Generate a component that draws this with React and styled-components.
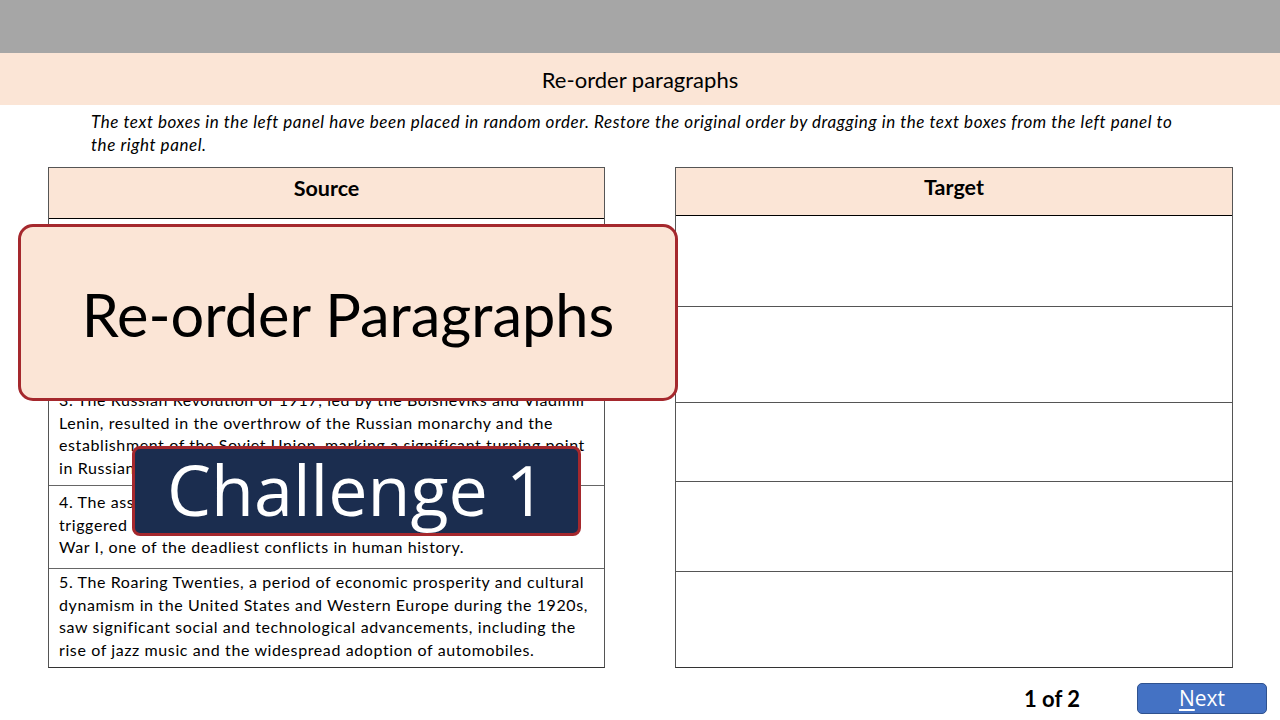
import React from 'react'
import styled, {createGlobalStyle} from 'styled-components'

const GlobalStyle = createGlobalStyle`
  html, body {
    margin: 0;
    padding: 0;
    background: #fff;
  }
  body {
    font-family: Lato, "Open Sans", sans-serif;
    color: #000;
  }
`

const Page = styled.div`
  position: relative;
  width: 1280px;
  height: 720px;
  overflow: hidden;
  background: #fff;
`

const Topbar = styled.div`
  height: 53px;
  background-color: #a6a6a6;
`

const TitleBar = styled.div`
  align-items: center;
  background-color: #fbe5d6;
  display: flex;
  font-size: 22px;
  height: 52px;
  justify-content: center;
`

const Instructions = styled.p`
  font-size: 17px;
  font-style: italic;
  letter-spacing: 0.56px;
  line-height: 23px;
  margin: 0;
  padding: 5px 60px 11px 91px;
  white-space: nowrap;
`

const Panels = styled.div`
  display: grid;
  gap: 70px;
  grid-template-columns: 557px 558px;
  margin-left: 48px;
`

const Panel = styled.div`
  border: 1px solid #555;
  border-bottom-color: #333;
  display: flex;
  flex-direction: column;
`

const PanelHeader = styled.div`
  align-items: center;
  background-color: #fbe5d6;
  border-bottom: 1px solid #000;
  box-sizing: border-box;
  display: flex;
  font-size: 21.5px;
  font-weight: 700;
  height: ${p => p.$h}px;
  justify-content: center;
  padding-bottom: 10px;
`

const SourceRow = styled.div`
  border-top: ${p => (p.$first ? 'none' : '1px solid #666')};
  box-sizing: border-box;
  font-size: 16px;
  height: ${p => p.$h}px;
  letter-spacing: 0.6px;
  line-height: 22.7px;
  padding: ${p => p.$pad}px 10px 0;
  white-space: nowrap;
`

const TargetRow = styled.div`
  border-top: ${p => (p.$first ? 'none' : '1px solid #555')};
  box-sizing: border-box;
  height: ${p => p.$h}px;
`

const Banner = styled.div`
  align-items: center;
  background-color: #fbe5d6;
  border: 3px solid #a5282d;
  border-radius: 15px;
  box-sizing: border-box;
  display: flex;
  font-size: 59.5px;
  height: 177px;
  justify-content: center;
  left: 18px;
  padding-top: 2px;
  position: absolute;
  top: 224px;
  width: 660px;
`

const Badge = styled.div`
  align-items: center;
  background-color: #1b2d4f;
  border: 3px solid #a5282d;
  border-radius: 8px;
  box-sizing: border-box;
  color: #fff;
  display: flex;
  font-family: "Open Sans", sans-serif;
  font-size: 70px;
  height: 90px;
  justify-content: center;
  left: 132px;
  padding-bottom: 4px;
  position: absolute;
  top: 446px;
  width: 449px;
`

const Footer = styled.div`
  align-items: center;
  display: flex;
  gap: 57px;
  justify-content: flex-end;
  padding: 15px 13px 0 0;
`

const Counter = styled.span`
  font-size: 22px;
  font-weight: 700;
`

const NextButton = styled.button`
  background-color: #4472c4;
  border: 1px solid #2f528f;
  border-radius: 5px;
  color: #fff;
  font-family: "Open Sans", sans-serif;
  font-size: 21px;
  height: 31px;
  line-height: 1;
  padding: 0;
  width: 130px;

  u {
    text-underline-offset: 3px;
  }
`

const sources = [
  {h: 83, pad: 5, lines: [
    '1. The signing of the Magna Carta in 1215 limited the powers of the',
    'English king and laid the foundations for constitutional law and the',
    'protection of individual rights.'
  ]},
  {h: 84, pad: 5, lines: [
    '2. The Industrial Revolution, which began in Britain in the late 18th',
    'century, transformed economies through mechanisation, factories',
    'and new sources of power such as steam.'
  ]},
  {h: 99, pad: 2, lines: [
    '3. The Russian Revolution of 1917, led by the Bolsheviks and Vladimir',
    'Lenin, resulted in the overthrow of the Russian monarchy and the',
    'establishment of the Soviet Union, marking a significant turning point',
    'in Russian history.'
  ]},
  {h: 83, pad: 5, lines: [
    '4. The assassination of Archduke Franz Ferdinand of Austria in 1914',
    'triggered a chain of events that led to the outbreak of World',
    'War I, one of the deadliest conflicts in human history.'
  ]},
  {h: 99, pad: 2, lines: [
    '5. The Roaring Twenties, a period of economic prosperity and cultural',
    'dynamism in the United States and Western Europe during the 1920s,',
    'saw significant social and technological advancements, including the',
    'rise of jazz music and the widespread adoption of automobiles.'
  ]}
]

const targets = [90, 96, 79, 90, 95]

const App = () => (
  <Page>
    <GlobalStyle />
    <Topbar />
    <TitleBar>Re-order paragraphs</TitleBar>
    <Instructions>
      The text boxes in the left panel have been placed in random order. Restore the original order by dragging in the text boxes from the left panel to
      <br />
      the right panel.
    </Instructions>
    <Panels>
      <Panel>
        <PanelHeader $h={51}>Source</PanelHeader>
        {sources.map((s, i) => (
          <SourceRow key={i} $first={i === 0} $h={s.h} $pad={s.pad}>
            {s.lines.map((l, j) => <div key={j}>{l}</div>)}
          </SourceRow>
        ))}
      </Panel>
      <Panel>
        <PanelHeader $h={48}>Target</PanelHeader>
        {targets.map((h, i) => <TargetRow key={i} $first={i === 0} $h={h} />)}
      </Panel>
    </Panels>
    <Footer>
      <Counter>1 of 2</Counter>
      <NextButton><u>N</u>ext</NextButton>
    </Footer>
    <Banner>Re-order Paragraphs</Banner>
    <Badge>Challenge 1</Badge>
  </Page>
)

export default App
